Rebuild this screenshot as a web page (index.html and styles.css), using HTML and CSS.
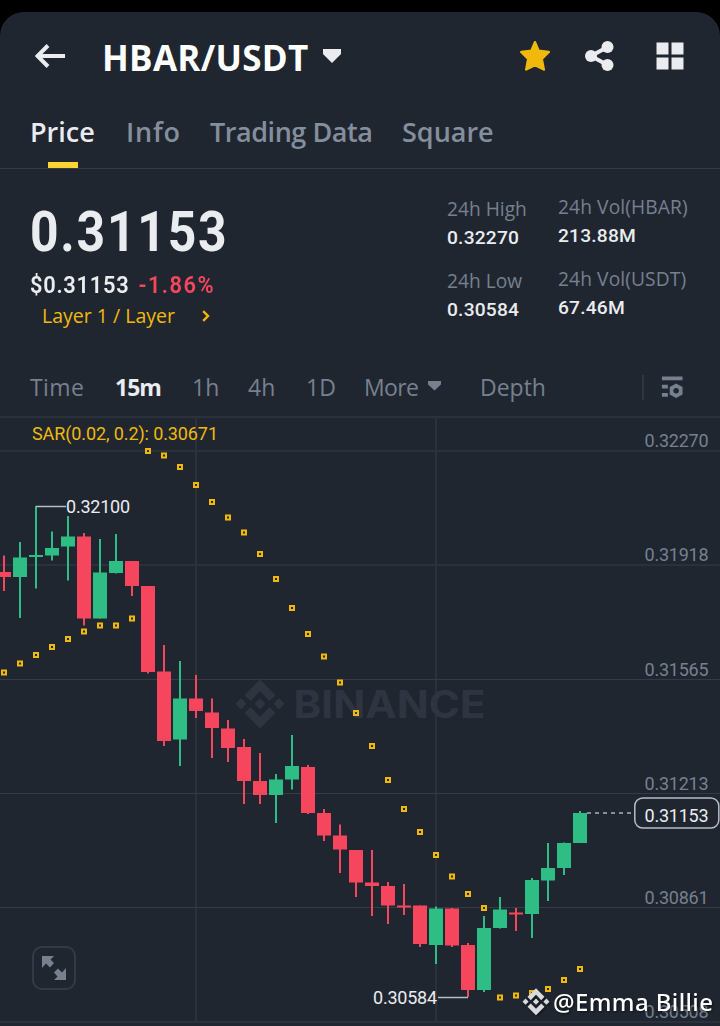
FILE: index.html
```html
<!DOCTYPE html>
<html lang="en">
<head>
    <meta charset="UTF-8">
    <meta name="viewport" content="width=device-width, initial-scale=1.0">
    <title>HBAR/USDT</title>
    <link rel="stylesheet" href="styles.css">
</head>
<body>
    <div class="app">
        <header class="header">
            <svg class="back" width="30" height="24" viewBox="0 0 30 24">
                <path d="M30 12H3M13 1.5L2.5 12L13 22.5" fill="none" stroke="#eaecef" stroke-width="4"/>
            </svg>
            <h1>HBAR/USDT</h1>
            <svg class="caret" width="18" height="14" viewBox="0 0 18 14">
                <path d="M0 0H18V5L9 14L0 5Z" fill="#eaecef"/>
            </svg>
            <div class="actions">
                <svg width="30" height="30" viewBox="0 0 30 30">
                    <path d="M15 1.2L18.6 9.8L28.8 11L21.8 18L23.8 28.5L15 24.2L6.2 28.5L8.2 18L1.2 11L11.4 9.8Z" fill="#f0b90b" stroke="#f0b90b" stroke-width="2.4" stroke-linejoin="round"/>
                </svg>
                <svg width="30" height="30" viewBox="0 0 30 30">
                    <path d="M22.500 6L6 15L22.500 24" fill="none" stroke="#eaecef" stroke-width="4"/>
                    <circle cx="6" cy="15" r="6" fill="#eaecef"/>
                    <circle cx="22.500" cy="6" r="6" fill="#eaecef"/>
                    <circle cx="22.500" cy="24" r="6" fill="#eaecef"/>
                </svg>
                <svg width="28" height="28" viewBox="0 0 28 28">
                    <path d="M0.5 0.5h12v12h-12zM15.5 0.5h12v12h-12zM0.5 15.5h12v12h-12zM15.5 15.5h12v12h-12z" fill="#eaecef"/>
                </svg>
            </div>
        </header>

        <nav class="tabs">
            <a class="tab price-tab active">Price</a>
            <a class="tab info">Info</a>
            <a class="tab trading">Trading Data</a>
            <a class="tab square">Square</a>
        </nav>

        <section class="ticker">
            <div class="price-box">
                <div class="price">0.31153</div>
                <div class="fiat"><span class="usd">$0.31153</span><span class="change">-1.86%</span></div>
                <div class="category">
                    <span>Layer 1 / Layer</span>
                    <svg width="8" height="12" viewBox="0 0 8 12">
                        <path d="M1.2 1.2L6 6L1.2 10.8" fill="none" stroke="#f0b90b" stroke-width="2.4"/>
                    </svg>
                </div>
            </div>
            <div class="stats">
                <div class="stat"><span class="label">24h High</span><span class="value">0.32270</span></div>
                <div class="stat"><span class="label">24h Low</span><span class="value">0.30584</span></div>
            </div>
            <div class="stats volume">
                <div class="stat"><span class="label">24h Vol(HBAR)</span><span class="value">213.88M</span></div>
                <div class="stat"><span class="label">24h Vol(USDT)</span><span class="value">67.46M</span></div>
            </div>
        </section>

        <div class="intervals">
            <span class="w-time">Time</span>
            <span class="w-15m active">15m</span>
            <span class="w-1h">1h</span>
            <span class="w-4h">4h</span>
            <span class="w-1d">1D</span>
            <span class="w-more">More</span>
            <svg class="more-caret" width="13" height="10" viewBox="0 0 13 10">
                <path d="M0 0H13V3.5L6.5 9.5L0 3.5Z" fill="#76808f"/>
            </svg>
            <span class="w-depth">Depth</span>
            <svg class="settings" width="24" height="25" viewBox="0 0 24 25">
                <path d="M1 0.5h22.500v4H1zM1 9.500h6.500v4H1zM1 18.500h6.500v4H1z" fill="#76808f"/>
                <path fill-rule="evenodd" d="M16.500 8L23.500 12V20L16.500 24L9.500 20V12ZM16.500 13a3 3 0 1 0 0 6a3 3 0 1 0 0-6Z" fill="#76808f"/>
            </svg>
        </div>

        <svg class="chart" width="720" height="610" viewBox="0 416 720 610">
            <g id="grid"></g>
            <g class="watermark">
                <g id="logo">
                    <path d="M260 679.500L275.500 695L269.500 701L260 691.300L250.500 701L244.500 695Z"/>
                    <path d="M260 728.500L275.500 713L269.500 707L260 716.700L250.500 707L244.500 713Z"/>
                    <path d="M260 698.200L265.600 703.800L260 709.400L254.400 703.800Z"/>
                    <path d="M241 698.200L246.600 703.800L241 709.400L235.400 703.800Z"/>
                    <path d="M279 698.200L284.600 703.800L279 709.400L273.400 703.800Z"/>
                </g>
                <text x="293.500" y="717.500" textLength="192" lengthAdjust="spacingAndGlyphs">BINANCE</text>
            </g>
            <g id="axis"></g>
            <g id="candles"></g>
            <g id="sar"></g>
            <text class="sar-label" x="32" y="440" textLength="186">SAR(0.02, 0.2): 0.30671</text>
            <path class="mark-line" d="M36 506.500H66"/>
            <text class="mark" x="66" y="513" textLength="64">0.32100</text>
            <path class="mark-line" d="M438 997.500H468"/>
            <text class="mark" x="373" y="1004" textLength="64">0.30584</text>
            <path class="last-line" d="M587 813H634"/>
            <rect class="last-box" x="634.800" y="798" width="84" height="30" rx="8"/>
            <text class="last" x="644.500" y="822" textLength="64">0.31153</text>
            <rect class="expand-box" x="33" y="947" width="42" height="42" rx="9"/>
            <path class="expand" d="M42 956H54L50.500 959.500L54 963L50 967.500L46 963.500L42 968Z"/>
            <path class="expand" d="M66 980H54L57.500 976.500L54 972.500L58 968.500L62 972.500L66 968Z"/>
            <g class="author">
                <use href="#logo" transform="translate(536 1001.800) scale(0.550) translate(-260 -704)"/>
                <text x="553" y="1010.500" textLength="160">@Emma Billie</text>
            </g>
        </svg>
    </div>

    <script>
        const NS = 'http://www.w3.org/2000/svg';

        // high, body top, body bottom, low, up (1) or down (0)
        const candles = [
            [555.5, 572, 577, 591, 0],
            [542, 557.5, 577, 618, 1],
            [506, 555, 557, 588.5, 1],
            [531.5, 548, 555.5, 560.5, 1],
            [516, 536.5, 546.5, 580.5, 1],
            [533, 536.5, 618.5, 625.5, 0],
            [539, 572.5, 618.5, 618.5, 1],
            [534, 561, 573, 573.5, 1],
            [561, 561, 586, 596, 0],
            [586, 586, 672, 673.5, 0],
            [645, 671.5, 741, 746, 0],
            [661, 698.5, 739.5, 766, 1],
            [675, 698.5, 711, 718, 0],
            [698.5, 712.5, 728, 758, 0],
            [720, 728.5, 748, 762, 0],
            [739, 747, 781, 804, 0],
            [753, 781, 795, 804, 0],
            [774, 779.5, 795, 823, 1],
            [735, 766, 779.5, 789.5, 1],
            [765, 767, 813, 814, 0],
            [809, 813, 835.5, 841, 0],
            [824.5, 835.5, 849.5, 873, 0],
            [850, 850, 882.5, 897, 0],
            [850, 882.5, 886, 916, 0],
            [882, 886, 905.5, 924, 0],
            [884, 905.5, 907.5, 915, 0],
            [905.5, 905.5, 944, 947, 0],
            [906.5, 908.5, 945, 964, 1],
            [908, 908.5, 945.5, 947, 0],
            [943, 945, 990, 997, 0],
            [916, 928, 990, 992, 1],
            [897, 909.5, 928, 928.5, 1],
            [908, 912.5, 914.5, 931, 0],
            [878, 880, 914, 938, 1],
            [843, 868, 880.5, 901, 1],
            [842.5, 843, 868, 875, 1],
            [811, 813, 843, 843, 1]
        ];

        const sar = [
            672.5, 663.5, 655, 647, 639, 631.5, 625.5, 625.5, 618.5,
            451, 455.5, 467, 485, 502, 517.5, 532.5, 554, 579, 608, 634, 656.5,
            682.5, 713, 746, 780, 809, 832, 855, 876.5, 894, 908,
            997.5, 995.5, 993, 989, 980, 969
        ];

        const levels = [
            [451, '0.32270'], [565, '0.31918'], [679.5, '0.31565'],
            [793.5, '0.31213'], [907.5, '0.30861'], [1022, '0.30508']
        ];

        function draw(parent, tag, attrs, text) {
            const el = document.createElementNS(NS, tag);
            for (const key in attrs) {
                el.setAttribute(key, attrs[key]);
            }
            if (text) {
                el.textContent = text;
            }
            document.getElementById(parent).appendChild(el);
        }

        function drawGrid() {
            draw('grid', 'path', { d: 'M0 417H720', class: 'grid-line' });
            draw('grid', 'path', { d: 'M196 418V1022M436 418V1022', class: 'grid-line' });
            levels.forEach(([y, label]) => {
                draw('grid', 'path', { d: `M0 ${y}H720`, class: y % 1 ? 'grid-line thin' : 'grid-line' });
                draw('axis', 'text', { x: 644.5, y: y - 4, textLength: 64, class: 'axis-label' }, label);
            });
        }

        function drawCandles() {
            candles.forEach(([high, top, bottom, low, up], i) => {
                const x = 4 + i * 16;
                const cls = up ? 'up' : 'down';
                draw('candles', 'rect', { x: x - 1, y: high, width: 2, height: low - high, class: cls });
                draw('candles', 'rect', { x: x - 7, y: top, width: 14, height: bottom - top, class: cls });
            });
        }

        function drawSar() {
            sar.forEach((y, i) => {
                draw('sar', 'rect', { x: 2 + i * 16, y: y - 2, width: 4, height: 4, class: 'sar-dot' });
            });
        }

        drawGrid();
        drawCandles();
        drawSar();
    </script>
</body>
</html>
```

FILE: styles.css
```css
* {
    margin: 0;
    padding: 0;
    box-sizing: border-box;
}

body {
    background: #000;
    color: #eaecef;
    font-family: 'Open Sans', 'Noto Sans', sans-serif;
    width: 720px;
    height: 1026px;
    overflow: hidden;
}

svg {
    display: block;
    flex: none;
}

span,
a {
    white-space: nowrap;
}

.app {
    margin-top: 12px;
    height: 1014px;
    background: #202630;
    border-radius: 24px 24px 0 0;
    overflow: hidden;
}

/* Header */
.header {
    display: flex;
    align-items: center;
    height: 88px;
    padding: 0 36px 0 35px;
}

.header h1 {
    width: 204px;
    margin: 3px 16px 0 37px;
    font-size: 35px;
    font-weight: 700;
    line-height: 40px;
    letter-spacing: 0.3px;
    white-space: nowrap;
    color: #fff;
}

.caret {
    margin-left: 1px;
}

.actions {
    display: flex;
    align-items: center;
    gap: 35px;
    margin-left: auto;
}

.actions svg:last-child {
    margin-left: 6px;
}

/* Tabs */
.tabs {
    display: flex;
    height: 69px;
    padding-left: 30px;
    border-bottom: 1px solid #333b47;
}

.tab {
    display: flex;
    flex-direction: column;
    justify-content: space-between;
    padding-top: 14px;
    font-size: 27px;
    font-weight: 600;
    line-height: 36px;
    color: #848e9c;
}

.price-tab { width: 96px; }

.info {
    width: 84px;
    letter-spacing: 0.8px;
}

.trading {
    width: 192px;
    letter-spacing: -0.45px;
}

.tab.active {
    color: #eaecef;
}

.tab.active::after {
    content: "";
    width: 30px;
    height: 6px;
    margin-left: 18px;
    background: #fcd535;
}

/* Ticker */
.ticker {
    display: flex;
    height: 189px;
    padding-left: 30px;
}

.price-box {
    width: 417px;
}

.price {
    margin-top: 34px;
    font-family: Roboto, sans-serif;
    font-size: 56px;
    font-weight: 700;
    line-height: 58px;
    letter-spacing: 2px;
    transform: scaleX(0.89);
    transform-origin: left;
}

.fiat {
    display: flex;
    gap: 10px;
    margin-top: 10px;
    font-family: Roboto, sans-serif;
    font-size: 24px;
    font-weight: 600;
    line-height: 28px;
    letter-spacing: 0.8px;
    transform: scaleX(0.91);
    transform-origin: left;
}

.change {
    letter-spacing: 1.6px;
    color: #f6465d;
}

.category {
    display: flex;
    align-items: center;
    gap: 28px;
    padding-left: 12px;
    margin-top: 3px;
    font-size: 19.5px;
    line-height: 28px;
    color: #f0b90b;
}

.category span {
    width: 132px;
}

.stats {
    width: 111px;
    padding-top: 26px;
}

.volume {
    width: auto;
    padding-top: 24px;
}

.volume .label {
    letter-spacing: 0.1px;
}

.stat {
    height: 72px;
}

.stat span {
    display: block;
    font-size: 19.2px;
    line-height: 28px;
}

.stat .label {
    color: #76808f;
}

.stat .value {
    margin-top: 1px;
    font-family: Roboto, sans-serif;
    font-weight: 500;
    letter-spacing: 0.2px;
}

/* Intervals */
.intervals {
    display: flex;
    align-items: center;
    height: 58px;
    padding-left: 30px;
    font-size: 23px;
    color: #76808f;
}

.intervals .active {
    color: #eaecef;
    font-weight: 700;
    letter-spacing: -1px;
}

.w-time {
    width: 85px;
    letter-spacing: 0.4px;
}
.w-15m { width: 77px; }
.w-1h { width: 56px; }
.w-4h { width: 58px; }
.w-1d { width: 58px; }
.w-more {
    width: 64px;
    letter-spacing: -0.6px;
}
.w-depth { width: 162px; }

.more-caret {
    margin: -3px 39px 0 0;
}

.settings {
    width: 41px;
    padding-left: 17px;
    border-left: 2px solid #2f3641;
}

/* Chart */
.chart text {
    font-family: Roboto, sans-serif;
    font-size: 18px;
}

.grid-line {
    fill: none;
    stroke: #2b313c;
    stroke-width: 2;
}

.grid-line.thin {
    stroke: #333b47;
    stroke-width: 1;
}

.watermark {
    fill: #2f3540;
}

.chart .watermark text {
    font-family: Inter, sans-serif;
    font-size: 38px;
    font-weight: 700;
}

.axis-label {
    fill: #76808f;
}

.up {
    fill: #2ebd85;
}

.down {
    fill: #f6465d;
}

.sar-dot {
    fill: none;
    stroke: #f0b90b;
    stroke-width: 2;
}

.sar-label {
    fill: #f0b90b;
}

.mark,
.last {
    fill: #eaecef;
}

.mark-line {
    stroke: #b7bdc6;
    stroke-width: 1.5;
}

.last-line {
    stroke: #848e9c;
    stroke-width: 2;
    stroke-dasharray: 4 4;
}

.last-box {
    fill: #202630;
    stroke: #b7bdc6;
    stroke-width: 1.5;
}

.expand-box {
    fill: none;
    stroke: #333a46;
    stroke-width: 2;
}

.expand {
    fill: #76808f;
}

.author {
    fill: #fff;
    filter: drop-shadow(1px 1px 1px rgba(0, 0, 0, 0.6));
}

.author use {
    fill: #d9dadc;
}

.chart .author text {
    font-family: 'Noto Sans', sans-serif;
    font-size: 24px;
    font-weight: 500;
}
```
